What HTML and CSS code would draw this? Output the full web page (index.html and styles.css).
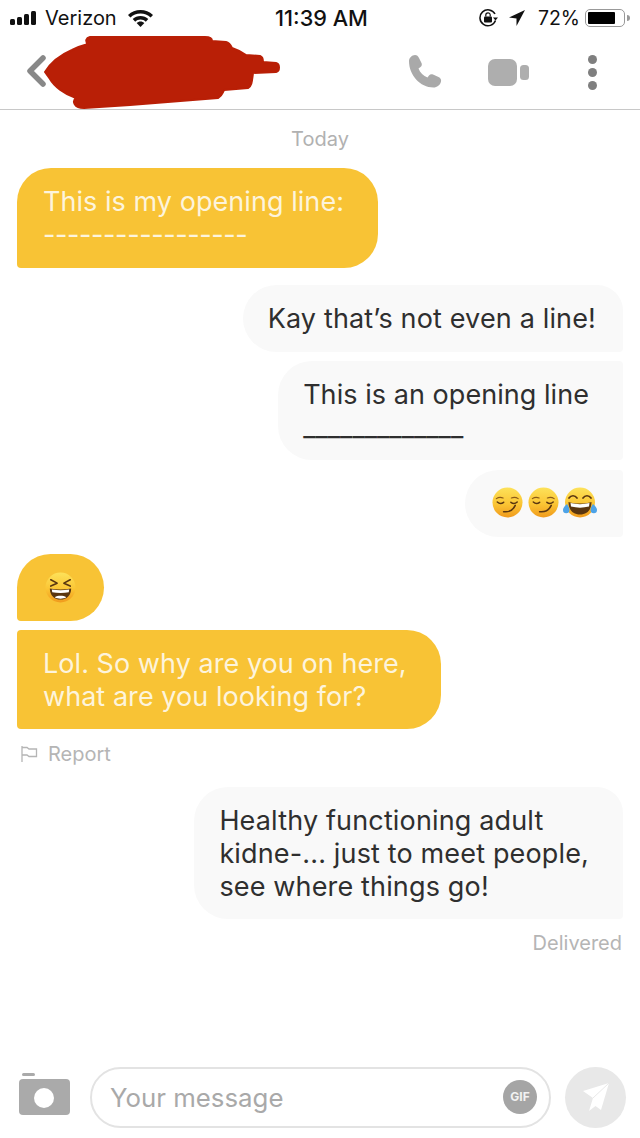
FILE: index.html
```html
<!DOCTYPE html>
<html>
	<head>
		<meta charset="UTF-8">
		<title>Chat</title>
		<link rel="stylesheet" href="styles.css">
	</head>
	<body>
		<svg class="defs" width="0" height="0">
			<defs>
				<linearGradient id="face" x1="0" y1="0" x2="0" y2="1">
					<stop offset="0" stop-color="#fde25a"/>
					<stop offset="0.55" stop-color="#fbc534"/>
					<stop offset="1" stop-color="#f09a1c"/>
				</linearGradient>
				<symbol id="smirk" viewBox="0 0 32 32">
					<circle cx="16" cy="16" r="15.500" fill="url(#face)"/>
					<path d="M4.500 12c2-1.400 4.500-1.600 7-.7M20 11.300c2.500-.9 5-.7 7 .7" fill="none" stroke="#8a5a18" stroke-width="1.200" stroke-linecap="round"/>
					<path d="M5.500 15.500c2 1.800 4.500 1.800 6.500.3M19.500 15.800c2 1.500 4.500 1.500 6.500-.3" fill="none" stroke="#5a3610" stroke-width="1.600" stroke-linecap="round"/>
					<path d="M12 25.500c4.500.6 9.500-1 12-6.500" fill="none" stroke="#5a3610" stroke-width="1.600" stroke-linecap="round"/>
				</symbol>
				<symbol id="joy" viewBox="0 0 34 31">
					<circle cx="17" cy="15.500" r="15" fill="url(#face)"/>
					<path d="M6 11c2-3 6-3 8 0M20 11c2-3 6-3 8 0" fill="none" stroke="#5a3610" stroke-width="1.700" stroke-linecap="round"/>
					<path d="M5.500 15c7 2 16 2 23 0c0 8-4.500 12.500-11.500 12.500S5.500 23 5.500 15z" fill="#5a3610"/>
					<path d="M7.500 16c6 1.500 13 1.500 19 0l-.5 3.500c-6 1.500-12 1.500-18 0z" fill="#fff"/>
					<path d="M4 17c-1.800 1.800-4 3.500-4 6a3.200 3.200 0 0 0 6.400 0c0-2-1-4.200-2.400-6z" fill="#4da3e8"/>
					<path d="M30 17c1.800 1.800 4 3.500 4 6a3.200 3.200 0 0 1-6.400 0c0-2 1-4.200 2.400-6z" fill="#4da3e8"/>
				</symbol>
				<symbol id="squint" viewBox="0 0 32 32">
					<circle cx="16" cy="16" r="15.500" fill="url(#face)"/>
					<path d="M6 8l6.500 3.500L6 14.500M26 8l-6.500 3.500L26 14.500" fill="none" stroke="#5a3610" stroke-width="1.700" stroke-linecap="round" stroke-linejoin="round"/>
					<path d="M5 17c7 1.500 15 1.500 22 0c0 7-4.500 11.500-11 11.500S5 24 5 17z" fill="#5a3610"/>
					<path d="M7 18c6 1 12 1 18 0l-.5 3c-5 1-12 1-17 0z" fill="#fff"/>
					<path d="M10 26c3.500-2 8.500-2 12 0c-3.500 2-8.500 2-12 0z" fill="#fff"/>
				</symbol>
			</defs>
		</svg>

		<header class="status">
			<div class="status-left">
				<svg class="signal" width="28" height="14" viewBox="0 0 28 14">
					<rect x="0" y="8" width="5" height="6" rx="1.500" fill="#111"/>
					<rect x="7" y="6" width="5" height="8" rx="1.500" fill="#111"/>
					<rect x="14" y="3" width="5" height="11" rx="1.500" fill="#111"/>
					<rect x="21" y="0" width="5" height="14" rx="1.500" fill="#111"/>
				</svg>
				<span class="carrier">Verizon</span>
				<svg class="wifi" width="25" height="17" viewBox="0 0 25 17">
					<path d="M12.500 0C7.800 0 3.500 1.800 0 5l2.400 2.600C5.100 5.100 8.600 3.600 12.500 3.600s7.400 1.500 10.100 4L25 5C21.500 1.800 17.200 0 12.500 0z" fill="#111"/>
					<path d="M12.500 6C9.500 6 6.800 7.100 4.700 9l2.500 2.700c1.400-1.300 3.300-2.100 5.300-2.100s3.900.8 5.300 2.100L20.300 9C18.200 7.100 15.500 6 12.500 6z" fill="#111"/>
					<path d="M12.500 11.500c-1.500 0-2.900.6-3.900 1.500l3.900 4 3.900-4c-1-.9-2.400-1.500-3.900-1.500z" fill="#111"/>
				</svg>
			</div>
			<div class="clock">11:39 AM</div>
			<div class="status-right">
				<svg class="lock" width="20" height="18" viewBox="0 0 20 18">
					<path d="M16.500 11.500A8 8 0 1 1 16 5" fill="none" stroke="#111" stroke-width="1.500"/>
					<path d="M14 8.500h5l-2.500 3z" fill="#111"/>
					<rect x="5" y="7.500" width="8" height="6" rx="1" fill="#111"/>
					<path d="M6.800 7.500V6a2.200 2.200 0 0 1 4.400 0v1.500" fill="none" stroke="#111" stroke-width="1.200"/>
				</svg>
				<svg class="arrow" width="16" height="16" viewBox="0 0 16 16">
					<path d="M16 0L0 7.500l7.500 1v7.500z" fill="#111"/>
				</svg>
				<span class="pct">72%</span>
				<div class="battery"><div class="battery-fill"></div></div>
				<div class="battery-nub"></div>
			</div>
		</header>

		<nav class="nav">
			<svg class="chevron" width="20" height="32" viewBox="0 0 20 32">
				<path d="M17 3L4 16l13 13" fill="none" stroke="#888" stroke-width="5.500" stroke-linejoin="round" stroke-linecap="round"/>
			</svg>
			<svg class="scribble" width="238" height="74" viewBox="43 36 238 74">
				<path d="M45 72C50 64 58 56 72 50C78 47 84 45 88 44C85 41 86 38 90 37L205 37C210 37 212 39 212 41L226 42C230 43 231 46 232 48C238 50 243 53 246 55L260 56C263 57 263 60 263 62L276 63C280 64 280 71 276 72L253 73C252 80 252 86 248 88L224 90C222 94 222 96 218 98L130 105L84 108C74 108 72 101 76 98C64 94 54 86 50 79z" fill="#b91f06" stroke="#b91f06" stroke-width="2" stroke-linejoin="round"/>
			</svg>
			<svg class="phone" width="34" height="35" viewBox="0 0 34 35">
				<path d="M1 6C1 3 4 0 7 0c2 0 3 1 4 3l2.500 5c.7 1.500.3 3-1 4l-2 1.500c1.500 4 5 7.500 9 9l1.500-2c1-1.300 2.500-1.700 4-1l5.500 2.500c2 1 3 2.500 2.500 4.500c-.7 3.500-4 6-7.500 6C12 32.500 1 20 1 6z" fill="#a9a9a9"/>
			</svg>
			<svg class="video" width="41" height="27" viewBox="0 0 41 27">
				<rect x="0" y="0" width="29" height="27" rx="7" fill="#aeaeae"/>
				<rect x="32" y="6" width="9" height="15" rx="3.500" fill="#aeaeae"/>
			</svg>
			<div class="dots">
				<span></span><span></span><span></span>
			</div>
		</nav>

		<main class="chat">
			<div class="day">Today</div>

			<div class="bubble them opener wrapped gap-a">This is my opening line:<br><span class="dashes">-----------------</span></div>

			<div class="bubble me first gap-b">Kay that’s not even a line!</div>
			<div class="bubble me next wrapped tight">This is an opening line<br><span class="rule">_____________</span></div>
			<div class="bubble me next emoji-row">
				<svg width="31" height="31"><use href="#smirk"/></svg>
				<svg width="31" height="31"><use href="#smirk"/></svg>
				<svg width="34" height="31"><use href="#joy"/></svg>
			</div>

			<div class="bubble them emoji-one gap-c">
				<svg width="31" height="31"><use href="#squint"/></svg>
			</div>
			<div class="bubble them next-l wrapped">Lol. So why are you on here,<br>what are you looking for?</div>

			<div class="report">
				<svg width="17" height="16" viewBox="0 0 17 16">
					<path d="M1 0v16M1 1.500h5l2 1.500h7.500v7.500H8l-2-1.500H1" fill="none" stroke="#b5b5b5" stroke-width="1.300"/>
				</svg>
				<span>Report</span>
			</div>

			<div class="bubble me first wrapped gap-d">Healthy functioning adult<br>kidne-... just to meet people,<br>see where things go!</div>
			<div class="delivered">Delivered</div>
		</main>

		<footer class="composer">
			<svg class="camera" width="51" height="42" viewBox="0 0 51 42">
				<rect x="3" y="0" width="13" height="3" rx="1.500" fill="#aaa"/>
				<rect x="0" y="6" width="51" height="36" rx="4" fill="#aaa"/>
				<circle cx="25" cy="25" r="10" fill="#fff"/>
			</svg>
			<div class="input">
				<span class="placeholder">Your message</span>
				<span class="gif">GIF</span>
			</div>
			<div class="send">
				<svg width="26" height="29" viewBox="0 0 26 29">
					<path d="M26 0L0 8l10 7-4 13 6.500-5 5.500 4z" fill="#fff"/>
					<path d="M26 0L10 15" fill="none" stroke="#e8e8e8" stroke-width="1"/>
				</svg>
			</div>
		</footer>
	</body>
</html>
```

FILE: styles.css
```css
* {
	box-sizing: border-box;
}
html, body {
	margin: 0;
	padding: 0;
}
body {
	width: 640px;
	height: 1138px;
	background: #fff;
	font-family: Inter, "Liberation Sans", sans-serif;
	color: #2f2f2f;
	display: flex;
	flex-direction: column;
	overflow: hidden;
}
.defs {
	position: absolute;
}

/* status bar */
.status {
	height: 36px;
	display: flex;
	align-items: center;
	justify-content: space-between;
	padding: 0 10px;
	position: relative;
	font-size: 20px;
	color: #111;
}
.status-left, .status-right {
	display: flex;
	align-items: center;
}
.carrier {
	margin-left: 7px;
}
.wifi {
	margin-left: 11px;
}
.clock {
	position: absolute;
	left: 3px;
	right: 0;
	text-align: center;
	font-size: 21.700px;
	font-weight: 500;
}
.arrow {
	margin-left: 10px;
}
.pct {
	margin-left: 13px;
	font-size: 19.500px;
}
.battery {
	width: 40px;
	height: 18px;
	margin-left: 5px;
	border: 1.500px solid #999;
	border-radius: 5px;
	padding: 2px;
}
.battery-fill {
	width: 27px;
	height: 100%;
	background: #000;
	border-radius: 1px;
}
.battery-nub {
	width: 3px;
	height: 6px;
	margin-left: 2px;
	background: #999;
	border-radius: 0 3px 3px 0;
}

/* nav */
.nav {
	height: 74px;
	border-bottom: 1px solid #c8c8c8;
	display: flex;
	align-items: center;
	padding-left: 26px;
}
.chevron {
	margin-top: -4px;
}
.scribble {
	margin-left: -3px;
}
.phone {
	margin-left: 127px;
	margin-top: -1px;
}
.video {
	margin-left: 46px;
	margin-top: -1px;
}
.dots {
	margin-left: 59px;
	display: flex;
	flex-direction: column;
	gap: 4px;
	margin-top: -1px;
}
.dots span {
	width: 9px;
	height: 9px;
	border-radius: 50%;
	background: #7f7f7f;
}

/* messages */
.chat {
	flex: 1;
	display: flex;
	flex-direction: column;
	align-items: flex-start;
	padding: 0 17px;
}
.day {
	align-self: center;
	margin-top: 16px;
	height: 27px;
	line-height: 27px;
	font-size: 20px;
	color: #b1b1b1;
}
.bubble {
	padding: 18px 27px 16px 25px;
	font-size: 27px;
	line-height: 32.670px;
	letter-spacing: 0.150px;
}
.wrapped {
	padding-right: 34px;
}
.tight {
	letter-spacing: 0.050px;
}
.them {
	background: #f8c335;
	color: #fdf4dc;
	border-radius: 34px 34px 34px 4px;
	padding-left: 26px;
	letter-spacing: 0.050px;
}
.opener {
	height: 100px;
}
.me {
	align-self: flex-end;
	background: #f9f9f9;
	color: #2f2f2f;
	border-radius: 34px 4px 4px 34px;
}
.me.first {
	border-top-right-radius: 26px;
}
.next {
	margin-top: 9px;
}
.next-l {
	margin-top: 9px;
	border-top-left-radius: 4px;
}
.gap-a {
	margin-top: 15px;
}
.gap-b {
	margin-top: 17px;
}
.gap-c {
	margin-top: 17px;
}
.gap-d {
	margin-top: 20px;
}
.dashes {
	letter-spacing: -0.400px;
}
.rule {
	letter-spacing: 0;
}
.emoji-row {
	display: flex;
	height: 67px;
	margin-top: 10px;
	padding: 0 26px 2px 27px;
	align-items: center;
	gap: 4.500px;
}
.emoji-one {
	display: flex;
	align-items: center;
	justify-content: center;
	width: 87px;
	height: 67px;
	padding: 0;
}
.report {
	display: flex;
	align-items: center;
	gap: 10px;
	margin-top: 12px;
	margin-left: 4px;
	height: 26px;
	font-size: 20px;
	color: #b5b5b5;
}
.delivered {
	align-self: flex-end;
	margin-top: 11px;
	margin-right: 1px;
	font-size: 20px;
	line-height: 26px;
	color: #b5b5b5;
}

/* composer */
.composer {
	display: flex;
	align-items: center;
	height: 60px;
	margin-bottom: 11px;
	padding-left: 19px;
}
.camera {
	margin-top: -6px;
}
.input {
	width: 461px;
	height: 61px;
	margin-left: 20px;
	border: 2px solid #e3e3e3;
	border-radius: 31px;
	display: flex;
	align-items: center;
	justify-content: space-between;
	padding: 0 12px 0 18px;
}
.placeholder {
	font-size: 25.800px;
	color: #a9a9a9;
}
.gif {
	width: 34px;
	height: 34px;
	border-radius: 50%;
	background: #a5a5a5;
	color: #f2f2f2;
	font-size: 12px;
	font-weight: 700;
	line-height: 34px;
	text-align: center;
}
.send {
	width: 61px;
	height: 61px;
	margin-left: 14px;
	border-radius: 50%;
	background: #e8e8e8;
	display: flex;
	align-items: center;
	justify-content: center;
}
```
